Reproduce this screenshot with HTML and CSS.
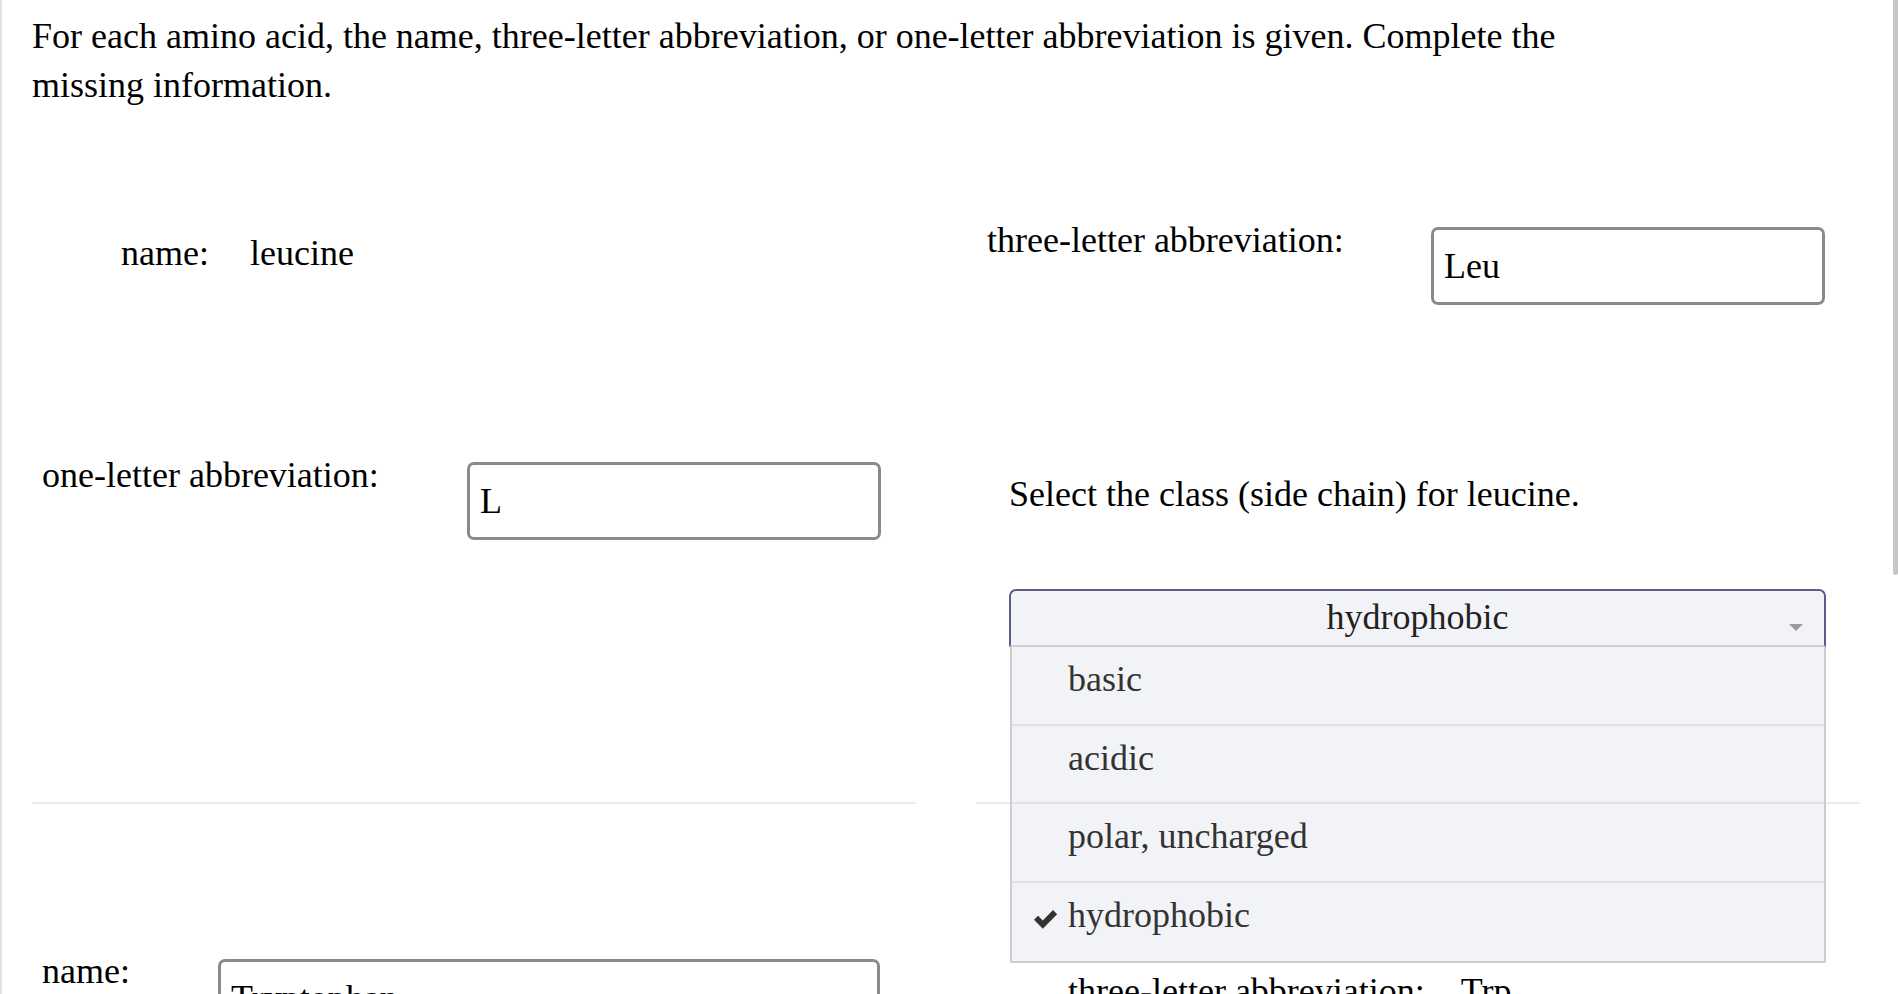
FILE: index.html
```html
<!DOCTYPE html>
<html lang="en">
<head>
<meta charset="utf-8">
<title>Amino acids</title>
<link rel="stylesheet" href="styles.css">
</head>
<body>
<div class="page">
  <p class="prompt">For each amino acid, the name, three-letter abbreviation, or one-letter abbreviation is given. Complete the missing information.</p>

  <div class="group group-first">
    <div class="col col-left">
      <div class="cell cell-name">
        <span class="label">name:</span>
        <span class="label">leucine</span>
      </div>
      <div class="cell cell-one">
        <span class="label">one-letter abbreviation:</span>
        <input class="field field-one" type="text" value="L">
      </div>
    </div>
    <div class="col col-right">
      <div class="cell cell-three">
        <span class="label">three-letter abbreviation:</span>
        <input class="field field-three" type="text" value="Leu">
      </div>
      <div class="cell cell-select">
        <span class="label">Select the class (side chain) for leucine.</span>
        <div class="select">
          <span class="select-value">hydrophobic</span>
          <span class="select-arrow"></span>
          <ul class="menu">
            <li class="option">basic</li>
            <li class="option">acidic</li>
            <li class="option">polar, uncharged</li>
            <li class="option option-last">
              <svg class="check" width="24" height="20" viewBox="0 0 17 14" preserveAspectRatio="none"><polygon points="0,7.6 2.9,4.7 6.2,8 13.5,0.7 16.4,3.6 6.2,13.8" fill="#333"/></svg>
              hydrophobic
            </li>
          </ul>
        </div>
      </div>
    </div>
  </div>

  <div class="group group-second">
    <div class="col col-left2">
      <div class="cell cell-name2">
        <span class="label">name:</span>
        <input class="field field-name" type="text" value="Tryptophan">
      </div>
    </div>
    <div class="col col-right2">
      <div class="cell cell-trp">
        <span class="label">three-letter abbreviation:</span>
        <span class="label">Trp</span>
      </div>
    </div>
  </div>
</div>
<div class="scroll-thumb"></div>
</body>
</html>
```

FILE: styles.css
```css
html {
  overflow: hidden;
  background: #ffffff;
}

body {
  margin: 0;
  min-height: 994px;
  border-left: 2px solid #e3e3e3;
  font-family: "Liberation Serif", "Times New Roman", Times, serif;
  font-size: 36px;
  color: #000;
}

.page {
  padding-left: 30px;
}

.prompt {
  margin: 0;
  padding-top: 12px;
  width: 1580px;
  line-height: 49px;
}

.group {
  display: grid;
  grid-template-columns: 884px 884px;
  column-gap: 60px;
}

.group-first {
  padding-bottom: 155px;
}

.label {
  line-height: 40px;
  white-space: nowrap;
}

.cell {
  display: flex;
  align-items: flex-start;
}

.field {
  box-sizing: border-box;
  height: 78px;
  margin: 7px 0 0 auto;
  padding: 0 10px;
  border: 3px solid #8a8a8a;
  border-radius: 7px;
  background: #fff;
  font-family: inherit;
  font-size: 36px;
  color: #000;
  outline: none;
}

/* left column, first amino acid */
.cell-name {
  margin-top: 123px;
  padding-left: 89px;
  gap: 41px;
}

.cell-one {
  margin-top: 182px;
  padding: 0 35px 0 10px;
}

.field-one {
  width: 414px;
}

/* right column, first amino acid */
.cell-three {
  margin-top: 110px;
  padding: 0 35px 0 11px;
}

.field-three {
  width: 394px;
}

.cell-select {
  margin-top: 169px;
  padding: 0 34px 0 33px;
  flex-direction: column;
  align-items: stretch;
}

.select {
  position: relative;
  box-sizing: border-box;
  height: 58px;
  margin-top: 75px;
  padding-top: 5px;
  border: 2px solid #5c5b8c;
  border-bottom: 2px solid #cfcfd2;
  border-radius: 7px 7px 0 0;
  background: #f2f3f7;
  text-align: center;
  color: #222;
}

.select-value {
  line-height: 40px;
}

.select-arrow {
  position: absolute;
  right: 21px;
  top: 33px;
  width: 0;
  height: 0;
  border-left: 7.5px solid transparent;
  border-right: 7.5px solid transparent;
  border-top: 7px solid #9a9a9a;
}

.menu {
  position: absolute;
  top: 56px;
  left: -1px;
  right: -2px;
  margin: 0;
  padding: 0;
  list-style: none;
  background: #f2f3f7;
  border: 2px solid #cdcdd0;
  border-top: none;
  text-align: left;
  color: #333;
  z-index: 2;
}

.option {
  position: relative;
  box-sizing: border-box;
  height: 78.5px;
  padding: 12px 0 0 56px;
  line-height: 40px;
  border-bottom: 2px solid #e1e2e6;
}

.option-last {
  height: 78px;
  border-bottom: none;
}

.check {
  position: absolute;
  left: 22px;
  top: 26px;
}

/* second amino acid */
.col-left2,
.col-right2 {
  border-top: 2px solid #ececec;
}

.cell-name2 {
  padding: 147px 36px 0 10px;
}

.field-name {
  width: 662px;
  margin-top: 8px;
}

.cell-trp {
  padding: 167px 0 0 92px;
  gap: 36px;
}

.scroll-thumb {
  position: fixed;
  top: -4px;
  right: 0;
  width: 5px;
  height: 579px;
  border-radius: 3px;
  background: #c6c6c6;
}
```
